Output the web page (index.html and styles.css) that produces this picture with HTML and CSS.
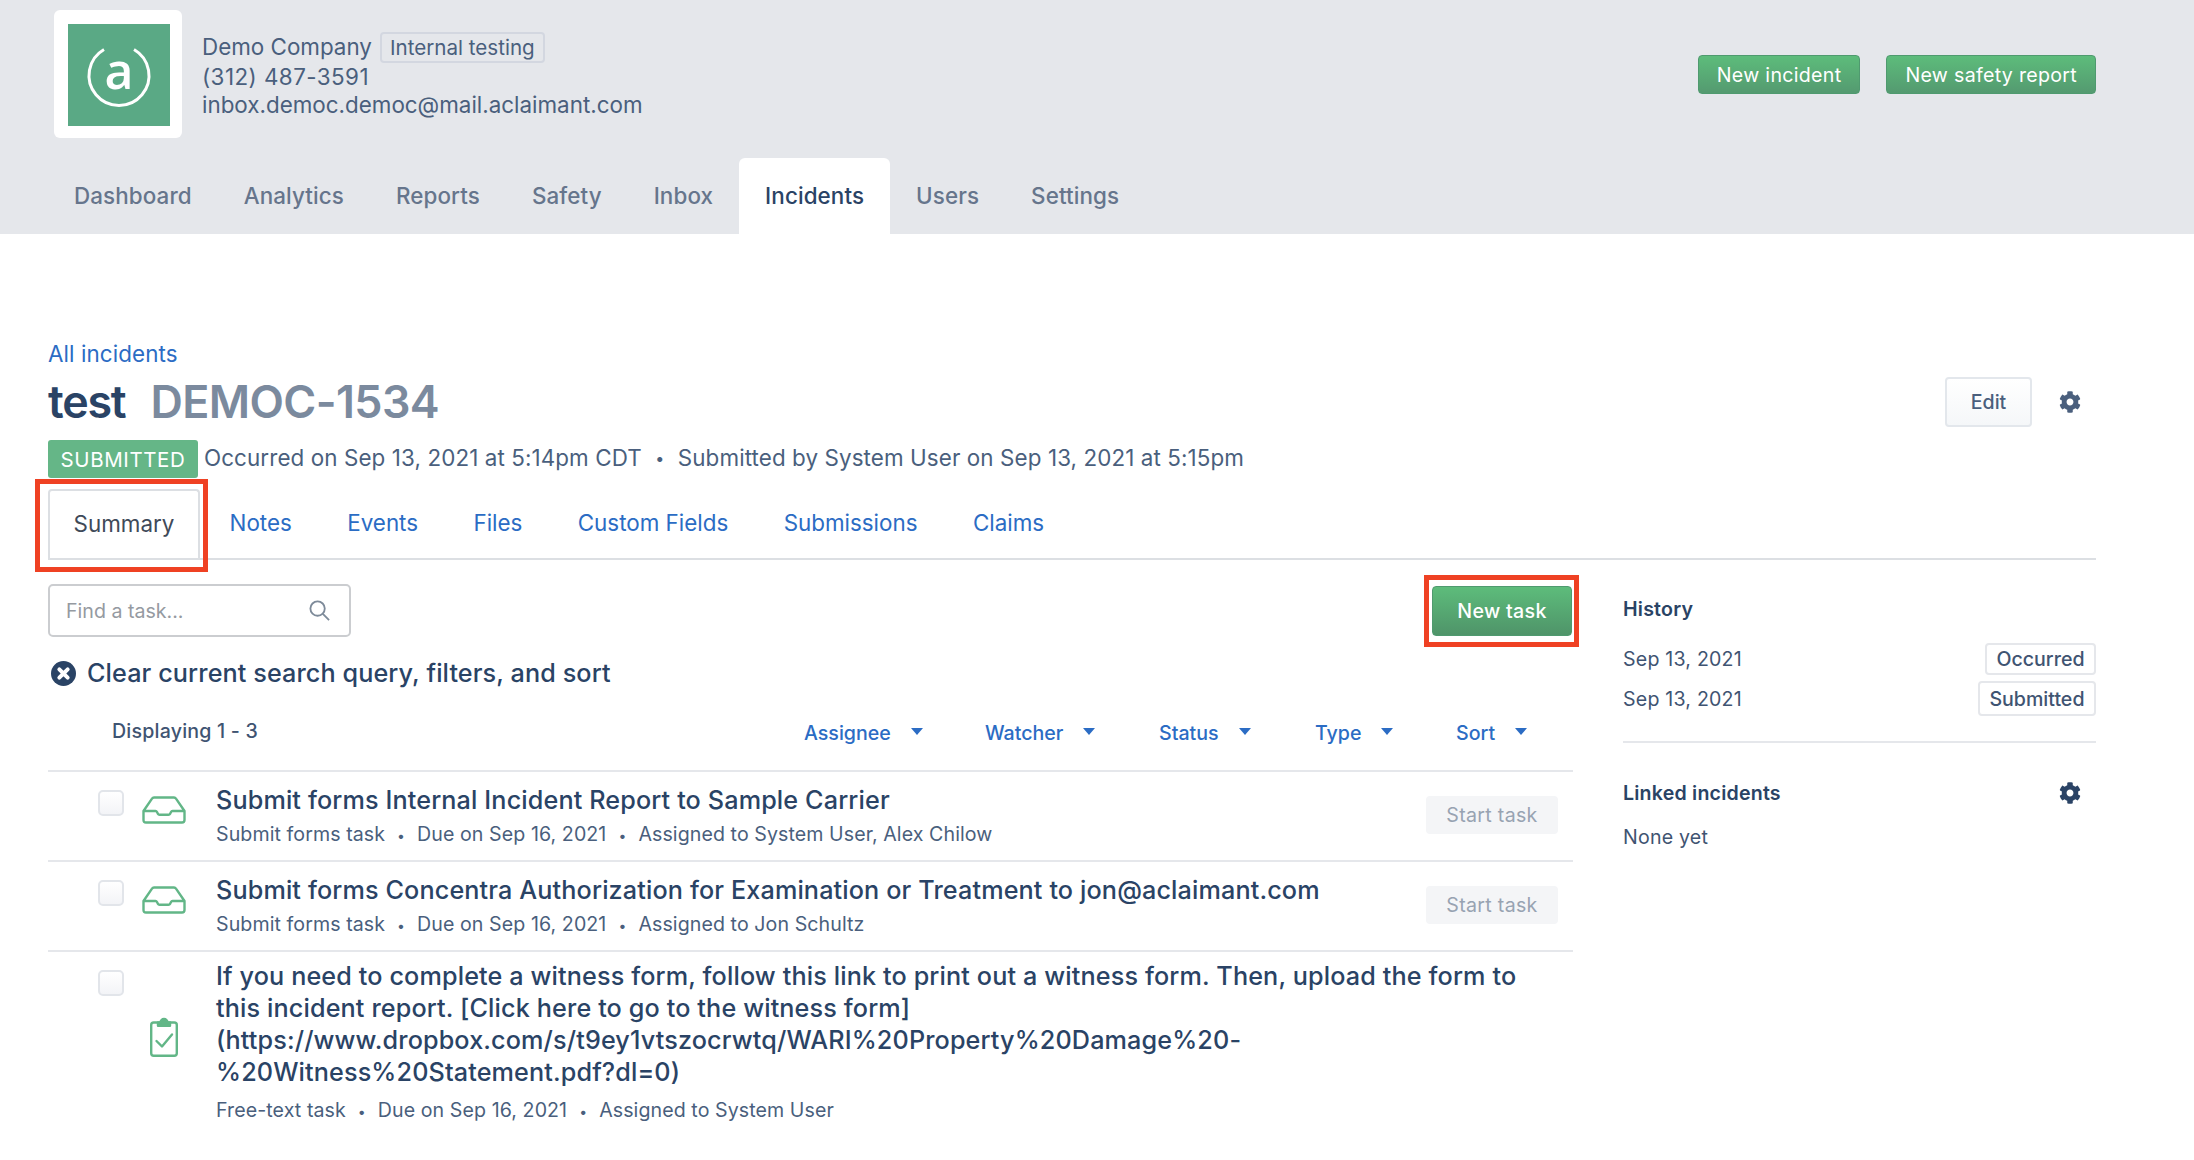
FILE: index.html
```html
<!DOCTYPE html>
<html lang="en">
<head>
<meta charset="utf-8">
<title>test DEMOC-1534</title>
<link rel="stylesheet" href="styles.css">
</head>
<body>
<header class="top">
  <div class="top-row">
    <div class="logo-frame">
      <svg class="logo" viewBox="0 0 102 102" aria-label="Aclaimant logo">
        <rect width="102" height="102" fill="#5aa985"/>
        <path d="M36 25.5 A30 30 0 1 0 66 25.5" fill="none" stroke="#fff" stroke-width="3"/>
        <text x="51" y="64.5" text-anchor="middle" class="logo-a">a</text>
      </svg>
    </div>
    <div class="org">
      <div class="org-name">Demo Company <span class="org-tag">Internal testing</span></div>
      <div class="org-phone">(312) 487-3591</div>
      <div>inbox.democ.democ@mail.aclaimant.com</div>
    </div>
    <div class="top-actions">
      <a class="btn btn-green">New incident</a>
      <a class="btn btn-green">New safety report</a>
    </div>
  </div>
  <nav class="nav">
    <a>Dashboard</a><a>Analytics</a><a>Reports</a><a>Safety</a><a>Inbox</a><a class="active">Incidents</a><a>Users</a><a>Settings</a>
  </nav>
</header>

<main class="page">
  <a class="back link">All incidents</a>
  <div class="title-row">
    <h1><span class="t-name">test</span><span class="t-id">DEMOC-1534</span></h1>
    <div class="title-actions">
      <a class="btn-edit">Edit</a>
      <svg class="gear gear-slate" viewBox="0 0 512 512"><use href="#cog"/></svg>
    </div>
  </div>
  <div class="status-row">
    <span class="badge">SUBMITTED</span>
    <span class="status-text">Occurred on Sep 13, 2021 at 5:14pm CDT</span><span class="dot">•</span><span class="status-text">Submitted by System User on Sep 13, 2021 at 5:15pm</span>
  </div>

  <div class="tabs">
    <a class="tab active">Summary<span class="redbox redbox-tab"></span></a>
    <a class="tab link">Notes</a>
    <a class="tab link">Events</a>
    <a class="tab link">Files</a>
    <a class="tab link">Custom Fields</a>
    <a class="tab link">Submissions</a>
    <a class="tab link">Claims</a>
  </div>

  <div class="columns">
    <section class="tasks">
      <div class="tool-row">
        <div class="search">
          <span>Find a task...</span>
          <svg viewBox="0 0 24 24" class="search-icon"><circle cx="10" cy="10" r="7.5"/><path d="M15.5 15.5 L22 22"/></svg>
        </div>
        <a class="btn-task">New task<span class="redbox redbox-btn"></span></a>
      </div>
      <div class="clear">
        <svg viewBox="0 0 24 24" class="clear-icon"><circle cx="12" cy="12" r="12"/><path d="M8 8 L16 16 M16 8 L8 16"/></svg>
        <span>Clear current search query, filters, and sort</span>
      </div>
      <div class="list-head">
        <span class="count">Displaying 1 - 3</span>
        <div class="filters">
          <a class="filter f1">Assignee<i class="caret"></i></a>
          <a class="filter f2">Watcher<i class="caret"></i></a>
          <a class="filter f3">Status<i class="caret"></i></a>
          <a class="filter f4">Type<i class="caret"></i></a>
          <a class="filter f5">Sort<i class="caret"></i></a>
        </div>
      </div>

      <article class="task">
        <span class="check"></span>
        <div class="task-icon">
          <svg viewBox="0 0 44 28" class="icon-inbox"><use href="#inbox"/></svg>
        </div>
        <div class="task-body">
          <h2>Submit forms Internal Incident Report to Sample Carrier</h2>
          <p>Submit forms task<span class="dot">•</span>Due on Sep 16, 2021<span class="dot">•</span>Assigned to System User, Alex Chilow</p>
        </div>
        <a class="btn-start">Start task</a>
      </article>

      <article class="task">
        <span class="check"></span>
        <div class="task-icon">
          <svg viewBox="0 0 44 28" class="icon-inbox"><use href="#inbox"/></svg>
        </div>
        <div class="task-body">
          <h2>Submit forms Concentra Authorization for Examination or Treatment to jon@aclaimant.com</h2>
          <p>Submit forms task<span class="dot">•</span>Due on Sep 16, 2021<span class="dot">•</span>Assigned to Jon Schultz</p>
        </div>
        <a class="btn-start">Start task</a>
      </article>

      <article class="task task-long">
        <span class="check"></span>
        <div class="task-icon">
          <svg viewBox="0 0 28 40" class="icon-clip"><rect x="1.2" y="5.5" width="25.6" height="33.3" rx="2.5"/><path d="M8 5.5 H10.5 A3.5 3.5 0 0 1 17.5 5.5 H20 V8.8 H8 Z" class="clip-top"/><path d="M6.5 24 L12 29.5 L22 17.5"/></svg>
        </div>
        <div class="task-body">
          <h2>If you need to complete a witness form, follow this link to print out a witness form. Then, upload the form to this incident report. [Click here to go to the witness form] (https://www.dropbox.com/s/t9ey1vtszocrwtq/WARI%20Property%20Damage%20-%20Witness%20Statement.pdf?dl=0)</h2>
          <p>Free-text task<span class="dot">•</span>Due on Sep 16, 2021<span class="dot">•</span>Assigned to System User</p>
        </div>
      </article>
    </section>

    <aside class="side">
      <h3>History</h3>
      <div class="hist"><span>Sep 13, 2021</span><span class="pill">Occurred</span></div>
      <div class="hist hist-2"><span>Sep 13, 2021</span><span class="pill pill-tall">Submitted</span></div>
      <div class="side-rule"></div>
      <div class="linked-head">
        <h3>Linked incidents</h3>
        <svg class="gear gear-navy" viewBox="0 0 512 512"><use href="#cog"/></svg>
      </div>
      <p class="none">None yet</p>
    </aside>
  </div>
</main>

<svg class="defs" width="0" height="0" aria-hidden="true">
  <defs>
    <path id="cog" d="M487.4 315.7l-42.6-24.6c4.3-23.2 4.3-47 0-70.2l42.6-24.6c4.9-2.8 7.1-8.6 5.5-14-11.1-35.6-30-67.8-54.7-94.6-3.8-4.1-10-5.1-14.8-2.3L380.8 110c-17.9-15.4-38.5-27.3-60.8-35.1V25.8c0-5.6-3.9-10.5-9.4-11.7-36.7-8.2-74.3-7.8-109.2 0-5.5 1.2-9.4 6.1-9.4 11.7V75c-22.2 7.9-42.8 19.8-60.8 35.1L88.7 85.5c-4.9-2.8-11-1.9-14.8 2.3-24.7 26.7-43.6 58.9-54.7 94.6-1.7 5.4.6 11.2 5.5 14L67.3 221c-4.3 23.2-4.3 47 0 70.2l-42.6 24.6c-4.9 2.8-7.1 8.6-5.5 14 11.1 35.6 30 67.8 54.7 94.6 3.8 4.1 10 5.1 14.8 2.3l42.6-24.6c17.9 15.4 38.5 27.3 60.8 35.1v49.2c0 5.6 3.9 10.5 9.4 11.7 36.7 8.2 74.3 7.8 109.2 0 5.5-1.2 9.4-6.1 9.4-11.7v-49.2c22.2-7.9 42.8-19.8 60.8-35.1l42.6 24.6c4.9 2.8 11 1.9 14.8-2.3 24.7-26.7 43.6-58.9 54.7-94.6 1.5-5.5-.7-11.3-5.6-14.1zM256 336c-44.1 0-80-35.9-80-80s35.9-80 80-80 80 35.9 80 80-35.9 80-80 80z"/>
    <path id="inbox" d="M1.5 15 L10 2.6 Q10.7 1.5 12 1.5 H32 Q33.3 1.5 34 2.6 L42.5 15 V24 Q42.5 26.5 40 26.5 H4 Q1.5 26.5 1.5 24 Z M1.5 15 H13.5 Q14.5 15 15 16 L16 18 Q16.4 18.8 17.5 18.8 H26.5 Q27.6 18.8 28 18 L29 16 Q29.5 15 30.5 15 H42.5" fill="none" stroke="#62b687" stroke-width="2.4" stroke-linejoin="round"/>
  </defs>
</svg>
</body>
</html>
```
FILE: styles.css
```css
* { box-sizing: border-box; }
html, body { margin: 0; padding: 0; background: #fff; }
body {
  font-family: Inter, "Liberation Sans", sans-serif;
  color: #2a4365;
  font-size: 19.6px;
  overflow: hidden;
}
h1, h2, h3, p { margin: 0; }
a { text-decoration: none; cursor: pointer; }
.link { color: #2b6cc4; }
.defs { position: absolute; }

/* Header */
.top { background: #e5e7eb; height: 234px; padding: 10px 98px 0 54px; display: flex; flex-direction: column; }
.top-row { display: flex; align-items: center; height: 128px; }
.logo-frame { width: 128px; height: 128px; background: #fff; border-radius: 6px; display: flex; align-items: center; justify-content: center; flex: none; padding: 2px 0 0 2px; }
.logo { width: 102px; height: 102px; display: block; }
.logo-a { font-family: "Open Sans", sans-serif; font-size: 50px; fill: #fff; font-weight: 600; }
.org { margin-left: 20px; color: #4a5f7d; font-size: 22.4px; line-height: 29px; padding-top: 2px; }
.org-name { display: flex; align-items: center; gap: 8px; }
.org-phone { letter-spacing: .45px; margin-top: 1px; margin-bottom: -1px; }
.org-tag { font-size: 20.6px; line-height: 27px; padding: 0 8px; border: 2px solid #d3d7e0; border-radius: 4px; font-weight: 400; margin-bottom: -3px; }
.top-actions { margin-left: auto; display: flex; gap: 26px; padding-top: 1px; }
.btn { display: flex; align-items: center; }
.btn-green {
  height: 39px; padding: 0 18px; border-radius: 4px; color: #fff; font-size: 19.6px; letter-spacing: .3px;
  background: linear-gradient(#5dbc7b, #549a70);
  border: 1px solid #4f9a6f;
}
.nav { display: flex; margin: 20px 0 0 -6px; height: 76px; flex: none; }
.nav a { display: flex; align-items: center; padding: 0 26px 2px; font-size: 22.4px; font-weight: 500; letter-spacing: .1px; color: #66758c; height: 76px; }
.nav a.active { background: #fff; color: #2a4365; border-radius: 6px 6px 0 0; }

/* Page */
.page { padding: 0 98px 0 48px; }
.back { display: block; font-size: 22.4px; line-height: 30px; margin-top: 105px; letter-spacing: .1px; }
.title-row { display: flex; align-items: center; justify-content: space-between; height: 64px; margin-top: 1px; }
h1 { font-size: 44.8px; font-weight: 600; letter-spacing: -.6px; display: flex; gap: 25px; }
.t-name { color: #2a4365; letter-spacing: -1.2px; }
.t-id { color: #7b8a9e; }
.title-actions { display: flex; align-items: center; gap: 27px; padding-right: 15px; }
.btn-edit { width: 87px; height: 50px; display: flex; align-items: center; justify-content: center; color: #4a5f7d; font-size: 19.6px; font-weight: 500; background: linear-gradient(#fff, #f5f7f9); border: 2px solid #e3e7ec; border-radius: 4px; }
.gear { display: block; fill: currentColor; }
.gear-slate { width: 22px; height: 24px; color: #4a5f7d; margin-bottom: 1px; }
.gear-navy { width: 22px; height: 24px; color: #2a4365; margin-bottom: 1px; }
.status-row { display: flex; align-items: center; height: 38px; margin-top: 6px; font-size: 22.4px; color: #4a5f7d; }
.status-text { letter-spacing: .1px; padding-bottom: 3px; }
.badge { background: #65b687; color: #fff; height: 38px; width: 150px; border-radius: 3px; display: flex; align-items: center; justify-content: center; font-size: 20.5px; letter-spacing: .6px; margin-right: 6px; }
.status-row .dot { margin: 0 13.5px; font-size: 16px; padding-bottom: 3px; }

/* Tabs */
.tabs { display: flex; align-items: stretch; height: 71px; margin-top: 11px; border-bottom: 2px solid #dcdfe3; }
.tab { display: flex; align-items: center; font-size: 22.4px; padding: 0 27.7px 2px; position: relative; }
.tab.active { color: #3f4a59; width: 152px; justify-content: center; padding: 0 0 2px; border: 2px solid #dcdfe3; border-bottom: none; border-radius: 4px 4px 0 0; margin-right: 1.9px; }
.redbox { position: absolute; border: 5px solid #ef4123; pointer-events: none; }
.redbox-tab { left: -15px; top: -12px; right: -10px; bottom: -14px; }
.redbox-btn { left: -9px; top: -12px; right: -8px; bottom: -12px; }

/* Columns */
.columns { display: flex; gap: 50px; }
.tasks { width: 1525px; flex: none; }
.side { flex: 1; padding-top: 36px; }

.tool-row { display: flex; align-items: center; justify-content: space-between; margin-top: 24px; padding-right: 1px; }
.search { width: 303px; height: 53px; border: 2px solid #cbcdd0; border-radius: 5px; display: flex; align-items: center; justify-content: space-between; padding: 0 18px 0 16px; color: #959aa1; font-size: 19.6px; }
.search-icon { width: 23px; height: 23px; fill: none; stroke: #7d8a99; stroke-width: 1.9; }
.btn-task { position: relative; width: 140px; height: 50px; display: flex; align-items: center; justify-content: center; color: #fff; font-size: 19.6px; font-weight: 500; border-radius: 4px; background: linear-gradient(#5dbc7b, #4f9469); border: 1px solid #4f9a6f; letter-spacing: .3px; }
.clear { display: flex; align-items: center; gap: 11px; margin-top: 20px; height: 32px; font-size: 25.2px; font-weight: 500; letter-spacing: .1px; }
.clear-icon { width: 25px; height: 25px; margin-left: 3px; flex: none; }
.clear-icon circle { fill: #2a4365; }
.clear-icon path { stroke: #fff; stroke-width: 3.8; stroke-linecap: round; }
.list-head { display: flex; align-items: center; height: 83px; padding: 2px 0 0 64px; border-bottom: 2px solid #e5e7eb; }
.count { font-size: 19.6px; font-weight: 500; color: #3f5472; letter-spacing: .2px; }
.filters { display: flex; margin-left: auto; padding-top: 4px; color: #2b6cc4; }
.filter { display: flex; align-items: center; color: #2b6cc4; font-size: 19.6px; font-weight: 500; }
.caret { width: 0; height: 0; border-left: 6px solid transparent; border-right: 6px solid transparent; border-top: 7px solid #2b6cc4; display: block; margin-top: -2px; margin-left: 20px; }
.f1 { width: 181px; }
.f2 { width: 174px; }
.f3 { width: 156px; }
.f4 { width: 141px; }
.f5 { width: 117px; }

.task { display: flex; align-items: flex-start; height: 90px; border-bottom: 2px solid #e5e7eb; position: relative; }
.task-long { height: auto; border-bottom: none; align-items: stretch; }
.check { width: 26px; height: 26px; flex: none; margin: 18px 0 0 50px; border: 2px solid #e2e5ea; border-radius: 5px; background: linear-gradient(#fff, #f3f4f7); }
.task-icon { width: 92px; flex: none; display: flex; justify-content: center; }
.icon-inbox { display: block; width: 44px; height: 28px; margin: 24px 0 0 -12px; }
.task-long .task-icon { align-items: flex-start; }
.icon-clip { display: block; width: 28px; height: 40px; margin: 65px 0 0 -12px; fill: none; stroke: #62b687; stroke-width: 2.4; stroke-linejoin: round; stroke-linecap: round; }
.icon-clip .clip-top { fill: #62b687; }
.task-body { flex: 1; min-width: 0; padding-top: 12px; }
.task-long .task-body { padding-top: 8px; padding-right: 20px; }
.task-body h2 { font-size: 25.2px; line-height: 32px; font-weight: 500; letter-spacing: .13px; color: #2a4365; }
.task-body p { font-size: 19.6px; line-height: 26px; color: #4a5f7d; margin-top: 5px; letter-spacing: .08px; }
.task-long .task-body p { margin-top: 9px; }
.task-body .dot { margin: 0 12px; font-size: 14px; }
.btn-start { flex: none; width: 132px; height: 38px; margin: 24px 15px 0 0; display: flex; align-items: center; justify-content: center; background: #f4f5f7; color: #98a3b2; border-radius: 4px; font-size: 19.6px; letter-spacing: .3px; }

/* Sidebar */
h3 { font-size: 19.6px; line-height: 26px; font-weight: 600; letter-spacing: .2px; color: #2a4365; }
.hist { display: flex; align-items: center; justify-content: space-between; color: #3f5472; font-size: 19.6px; margin-top: 21px; height: 32px; letter-spacing: .2px; }
.hist-2 { margin-top: 6px; height: 35px; }
.pill { border: 2px solid #e5e7eb; border-radius: 4px; height: 32px; padding: 0 9.5px; display: flex; align-items: center; font-weight: 500; letter-spacing: 0; }
.pill-tall { height: 35px; }
.side-rule { height: 2px; background: #e5e7eb; margin-top: 25px; }
.linked-head { display: flex; justify-content: space-between; align-items: center; margin-top: 37px; padding-right: 15px; }
.none { color: #3f5472; font-size: 19.6px; line-height: 26px; margin-top: 18px; letter-spacing: .2px; }
```
